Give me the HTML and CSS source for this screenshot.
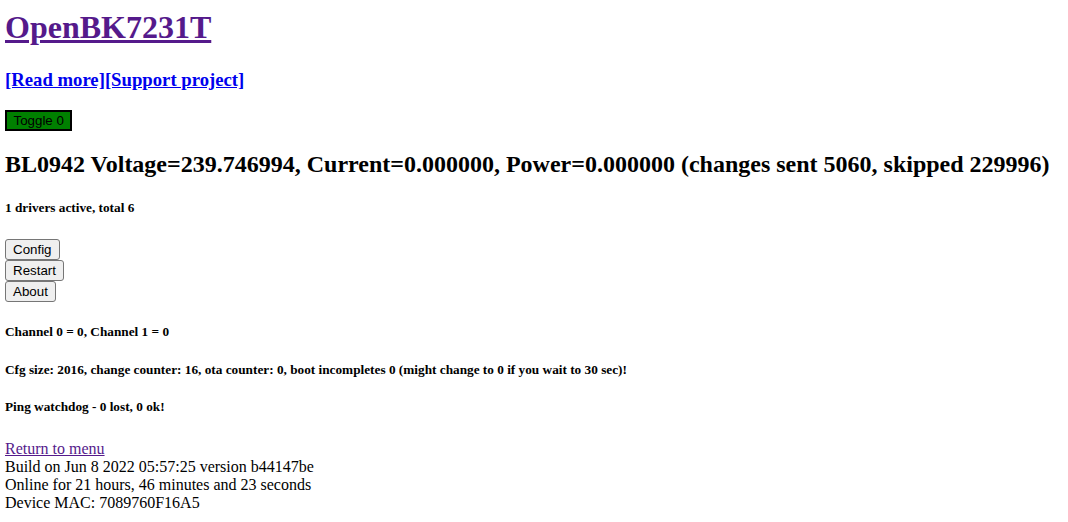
FILE: index.html
```html
<!DOCTYPE html>
<html>
<head>
<meta charset="utf-8">
<title>OpenBK7231T</title>
<link rel="stylesheet" href="styles.css">
</head>
<body>
<h1 class="title"><a class="visited" href="#">OpenBK7231T</a></h1>
<h3 class="links"><a class="link" href="#">[Read more]</a><a class="link" href="#">[Support project]</a></h3>
<form class="btn-form"><button type="button" class="btn toggle">Toggle 0</button></form>
<h2 class="status">BL0942 Voltage=239.746994, Current=0.000000, Power=0.000000 (changes sent 5060, skipped 229996)</h2>
<h5 class="note">1 drivers active, total 6</h5>
<form class="btn-form"><button type="button" class="btn">Config</button></form>
<form class="btn-form"><button type="button" class="btn">Restart</button></form>
<form class="btn-form"><button type="button" class="btn">About</button></form>
<h5 class="note">Channel 0 = 0, Channel 1 = 0</h5>
<h5 class="note">Cfg size: 2016, change counter: 16, ota counter: 0, boot incompletes 0 (might change to 0 if you wait to 30 sec)!</h5>
<h5 class="note">Ping watchdog - 0 lost, 0 ok!</h5>
<div class="footer">
<a class="visited" href="#">Return to menu</a><br>
Build on Jun 8 2022 05:57:25 version b44147be<br>
Online for 21 hours, 46 minutes and 23 seconds<br>
Device MAC: 7089760F16A5
</div>
</body>
</html>
```
FILE: styles.css
```css
html, body {
  background: #ffffff;
}
body {
  margin: 0;
  padding: 0 5px;
  font-family: "Liberation Serif", "Times New Roman", serif;
  color: #000000;
}
.visited {
  color: #551a8b;
}
.link {
  color: #0000ee;
}
.title {
  font-size: 32px;
  line-height: 35.4px;
  font-weight: bold;
  margin: 9.8px 0 24.8px;
}
.links {
  font-size: 18.72px;
  line-height: 20.7px;
  font-weight: bold;
  margin: 0 0 19.3px;
}
.btn-form {
  display: flex;
  margin: 0;
}
.btn {
  font-family: "Liberation Sans", Arial, sans-serif;
  font-size: 13.333px;
  line-height: 15px;
  padding: 2px 7px;
  border: 1px solid #767676;
  border-radius: 3px;
  background: #efefef;
  color: #000000;
  margin: 0;
}
.toggle {
  background: #008000;
  border: 2px solid #000000;
  border-radius: 0;
  padding: 1px 6.5px;
}
.status {
  font-size: 24px;
  line-height: 26.6px;
  font-weight: bold;
  margin: 20.3px 0 22px;
  white-space: nowrap;
}
.note {
  font-size: 13.28px;
  line-height: 14.7px;
  font-weight: bold;
  margin: 23.1px 0;
}
.footer {
  font-size: 16px;
  line-height: 18px;
  margin-top: 25px;
}
```
